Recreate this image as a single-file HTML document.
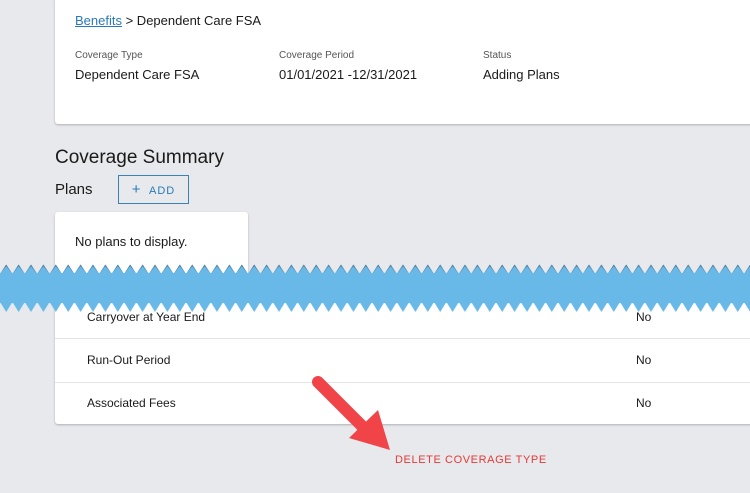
<!DOCTYPE html>
<html><head><meta charset="utf-8"><style>
body{margin:0;width:750px;height:493px;background:#e8e9ed;font-family:"Liberation Sans",sans-serif;position:relative;overflow:hidden;color:#1a1a1a}
.card{position:absolute;background:#fff;box-shadow:0 1px 2px rgba(0,0,0,.25);border-radius:3px}
.a{position:absolute;white-space:nowrap}
.lbl{font-size:10px;color:#555}
.val{font-size:13px}
.row{position:absolute;left:0;right:0;height:43px;border-bottom:1px solid #e3e3e3;font-size:12px}
</style></head><body>
<div class="card" style="left:55px;top:-4px;width:700px;height:128px"></div>
<div class="a" style="left:75px;top:13px;font-size:13px"><span style="color:#2a7ab8;text-decoration:underline">Benefits</span> &gt; Dependent Care FSA</div>
<div class="a lbl" style="left:75px;top:50px">Coverage Type</div>
<div class="a lbl" style="left:279px;top:50px">Coverage Period</div>
<div class="a lbl" style="left:483px;top:50px">Status</div>
<div class="a val" style="left:75px;top:67px">Dependent Care FSA</div>
<div class="a val" style="left:279px;top:67px">01/01/2021 -12/31/2021</div>
<div class="a val" style="left:483px;top:67px">Adding Plans</div>
<div class="a" style="left:55px;top:147px;font-size:19px">Coverage Summary</div>
<div class="a" style="left:55px;top:181px;font-size:15px">Plans</div>
<div class="a" style="left:118px;top:175px;width:71px;height:29px;border:1px solid #3b83b5;box-sizing:border-box;color:#2a7ab8;font-size:11px;letter-spacing:1px;line-height:27px;text-align:center"><span style="font-size:15px">+</span>&nbsp; ADD</div>
<div class="card" style="left:55px;top:212px;width:193px;height:70px"></div>
<div class="a" style="left:75px;top:234px;font-size:13px">No plans to display.</div>
<div class="card" style="left:55px;top:280px;width:700px;height:144px">
<div class="row" style="top:15px"><span class="a" style="left:32px;top:15px">Carryover at Year End</span><span class="a" style="left:581px;top:15px">No</span></div>
<div class="row" style="top:59px"><span class="a" style="left:32px;top:14px">Run-Out Period</span><span class="a" style="left:581px;top:14px">No</span></div>
<div class="row" style="top:102px;border:none"><span class="a" style="left:32px;top:14px">Associated Fees</span><span class="a" style="left:581px;top:14px">No</span></div>
</div>
<svg class="a" style="left:0;top:260px" width="750" height="56">
<defs>
<pattern id="t" width="12.4" height="56" patternUnits="userSpaceOnUse">
<polygon points="0,14 6.2,6 12.4,14" fill="#68b8e8"/>
<polygon points="0,42 6.2,52 12.4,42" fill="#68b8e8"/>
</pattern>
<pattern id="s" width="12.4" height="56" patternUnits="userSpaceOnUse">
<polygon points="0,14 6.2,4.5 12.4,14" fill="#3a6f90"/>
</pattern>
</defs>
<rect width="750" height="56" fill="url(#s)"/>
<rect width="750" height="56" fill="url(#t)"/>
<rect y="13" width="750" height="30" fill="#68b8e8"/>
</svg>
<svg class="a" style="left:300px;top:370px" width="110" height="95">
<line x1="18" y1="12" x2="64" y2="58" stroke="#f04448" stroke-width="12" stroke-linecap="round"/>
<polygon points="49,68 78,40 90,80" fill="#f04448"/>
</svg>
<div class="a" style="left:395px;top:454px;color:#e53935;font-size:11px;letter-spacing:.6px">DELETE COVERAGE TYPE</div>
</body></html>
